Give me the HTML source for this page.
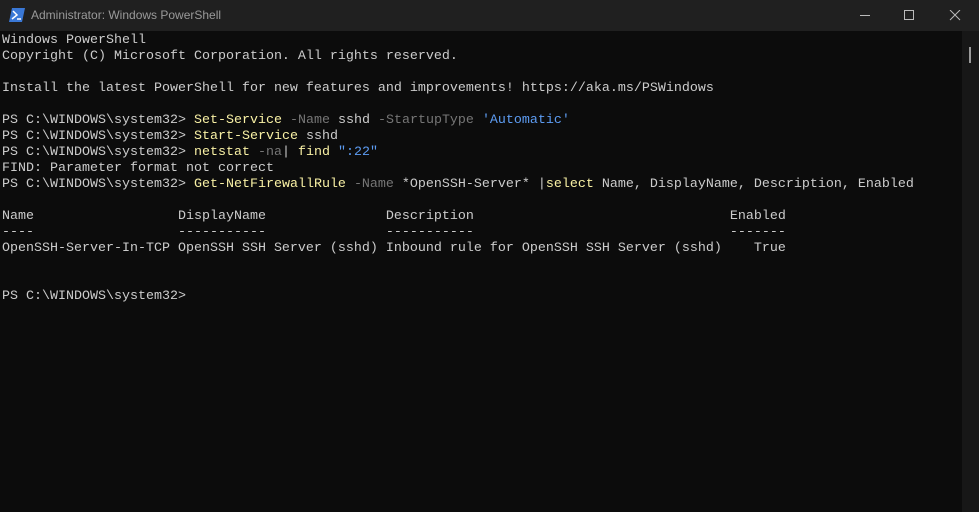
<!DOCTYPE html>
<html><head><meta charset="utf-8"><style>
html,body{margin:0;padding:0;width:979px;height:512px;overflow:hidden;background:#0c0c0c;}
.title{position:absolute;left:0;top:0;width:979px;height:31px;background:#202020;}
.title .t{position:absolute;left:31px;top:8px;font:12px "Liberation Sans",sans-serif;color:#9a9a9a;}
.term{position:absolute;left:2px;top:33px;font-family:"Liberation Mono",monospace;font-size:13.33px;line-height:16px;color:#cccccc;white-space:pre;}
.y{color:#f9f1a5}.g{color:#767676}.b{color:#5d9cf2}
.sb{position:absolute;left:962px;top:31px;width:17px;height:481px;background:#171717;}
.thumb{position:absolute;left:969px;top:47px;width:2px;height:16px;background:#9a9a9a;}
</style></head><body>
<div class="title">
<svg style="position:absolute;left:9px;top:8px" width="16" height="14" viewBox="0 0 16 14"><path d="M3 0H16L13 14H0Z" fill="#3a78d6"/><path d="M4 3L8 7L3 11" stroke="#fff" stroke-width="1.5" fill="none"/><path d="M8 11H12" stroke="#fff" stroke-width="1.5"/></svg>
<div class="t">Administrator: Windows PowerShell</div>
<svg style="position:absolute;left:855px;top:10px" width="120" height="12" viewBox="0 0 120 12"><path d="M5 5.5H15" stroke="#bbb"/><rect x="49.5" y="0.5" width="9" height="9" stroke="#bbb" fill="none"/><path d="M95 0L105 10M105 0L95 10" stroke="#bbb"/></svg>
</div>
<div class="sb"></div><div class="thumb"></div>
<div class="term">Windows PowerShell
Copyright (C) Microsoft Corporation. All rights reserved.

Install the latest PowerShell for new features and improvements! https://aka.ms/PSWindows

PS C:\WINDOWS\system32&gt; <span class="y">Set-Service</span> <span class="g">-Name</span> sshd <span class="g">-StartupType</span> <span class="b">'Automatic'</span>
PS C:\WINDOWS\system32&gt; <span class="y">Start-Service</span> sshd
PS C:\WINDOWS\system32&gt; <span class="y">netstat</span> <span class="g">-na</span>| <span class="y">find</span> <span class="b">":22"</span>
FIND: Parameter format not correct
PS C:\WINDOWS\system32&gt; <span class="y">Get-NetFirewallRule</span> <span class="g">-Name</span> *OpenSSH-Server* |<span class="y">select</span> Name, DisplayName, Description, Enabled

Name                  DisplayName               Description                                Enabled
----                  -----------               -----------                                -------
OpenSSH-Server-In-TCP OpenSSH SSH Server (sshd) Inbound rule for OpenSSH SSH Server (sshd)    True


PS C:\WINDOWS\system32&gt;</div>
</body></html>
